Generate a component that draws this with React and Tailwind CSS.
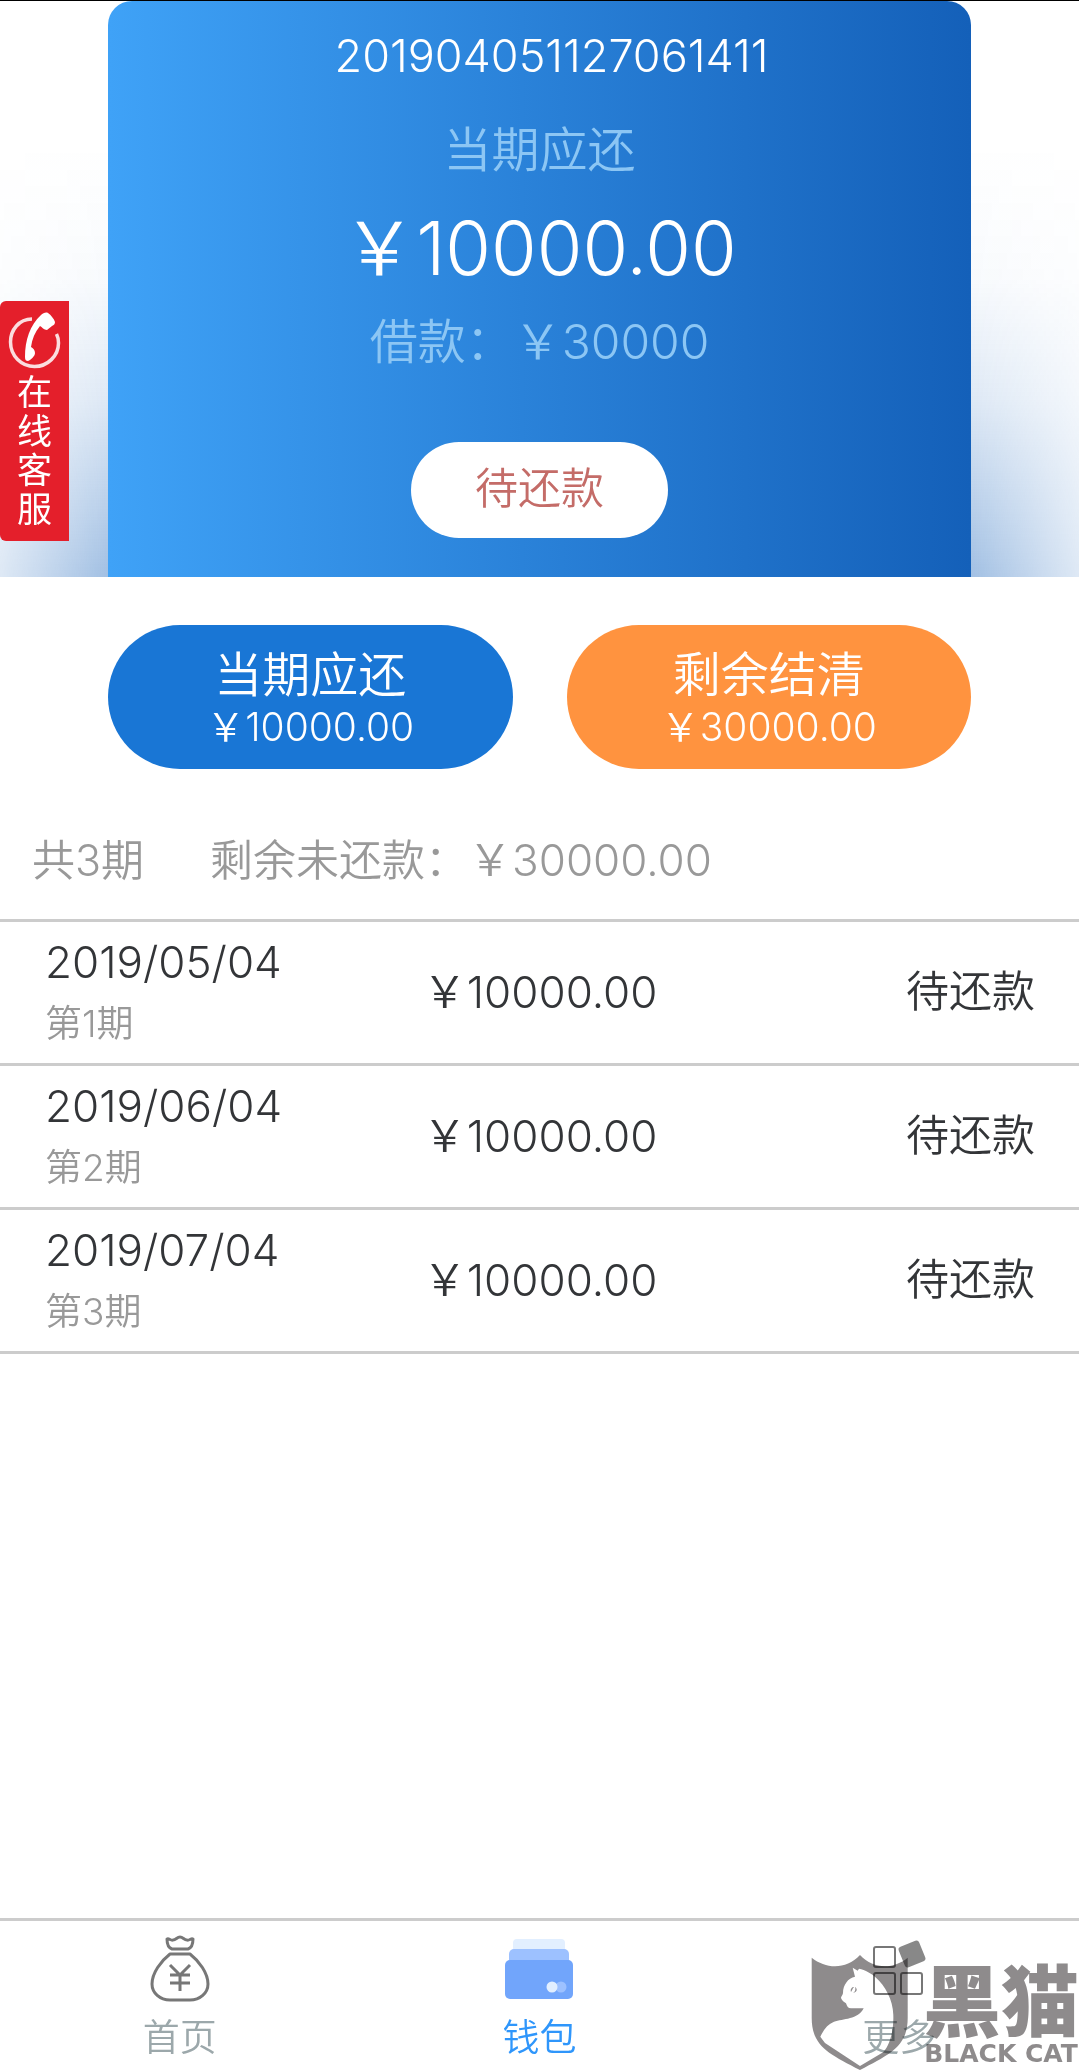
const rows = [
  { date: '2019/05/04', term: '第1期', amount: '￥10000.00', status: '待还款' },
  { date: '2019/06/04', term: '第2期', amount: '￥10000.00', status: '待还款' },
  { date: '2019/07/04', term: '第3期', amount: '￥10000.00', status: '待还款' },
];

function PhoneIcon() {
  return (
    <svg viewBox="0 0 69 62" className="h-[62px] w-[69px]" aria-hidden="true">
      <path d="M32 12C19 12 10.500 23 10.500 35c0 14 11 24.500 24 24.500S58.500 49 58.500 36c0-4-1-7-2-9" fill="none" stroke="#fff" strokeOpacity=".85" strokeWidth="3.500" />
      <path d="M41 8c2-2 5-3 7-2 3 2 6 6 7 9 0 2-1 3-3 4l-5 4c-3 0-5-3-7-4-5 6-8 13-9 21 2 1 4 3 4 6s-4 7-7 8c-2 0-3-1-3-4 0-17 5-32 16-42Z" fill="#fff" />
    </svg>
  );
}

function BagIcon() {
  return (
    <svg viewBox="0 0 64 72" className="h-[72px] w-[64px]" fill="none" stroke="#777" strokeWidth="3" strokeLinejoin="round" strokeLinecap="round" aria-hidden="true">
      <path d="M19 4c0 6 2 9 5 10h16c3-1 5-4 5-10-2-1-4 2-6 1-3 0-4-3-7-3s-4 3-7 3c-2 1-4-2-6-1Z" />
      <path d="M22 19h20c9 7 18 19 18 30 0 9-8 16-18 16H22C12 65 4 58 4 49c0-11 9-23 18-30Z" />
      <path d="M22 30l10 10 10-10M22 40h20M22 48h20M32 40v16" strokeLinecap="butt" />
    </svg>
  );
}

function WalletIcon() {
  return (
    <svg viewBox="0 0 68 72" className="h-[72px] w-[68px]" aria-hidden="true">
      <rect x="8" y="4" width="52" height="30" rx="4" fill="#e2efff" />
      <rect x="4" y="14" width="60" height="30" rx="5" fill="#9dc1ff" />
      <rect x="0" y="25" width="68" height="39" rx="5" fill="#71a5fb" />
      <circle cx="56" cy="52" r="5.500" fill="#9dc1ff" />
      <circle cx="47" cy="52" r="5.500" fill="#e2efff" />
    </svg>
  );
}

function GridIcon() {
  return (
    <svg viewBox="0 0 64 72" className="h-[72px] w-[64px]" fill="none" stroke="#777" strokeWidth="2" aria-hidden="true">
      <rect x="7" y="12" width="21" height="20" rx="2" />
      <rect x="7" y="38" width="21" height="21" rx="2" />
      <rect x="34" y="38" width="21" height="21" rx="2" />
      <rect x="34" y="8" width="22" height="22" rx="3" transform="rotate(-22 45 19)" fill="#888" stroke="none" />
    </svg>
  );
}

function Watermark() {
  return (
    <div className="pointer-events-none absolute right-0 bottom-0 flex items-end text-[#8e8b8c] mix-blend-multiply">
      <svg viewBox="0 0 98 115" className="h-[115px] w-[98px]" aria-hidden="true">
        <path
          fillRule="evenodd"
          fill="#8e8b8c"
          d="M.7 2.700C15 14 35 15 49 0c14 15 34 14 47.700 2.700V63c0 28-17 36-47.700 52C18 99 .7 91 .7 63ZM41.700 12.700l5 3 1.300-2c6 1 13 5 17 9 9 8 17 22 17.300 37C83 79 77 93 71.700 97.500L49 111 14 88 9.300 81.700C13 74 17 69 23 66.700c9-3 24-2 29.700-13.400H40c-3 0-4-2-5-5-2-1-4-3-5-5.300 0-2 2-3 2-5C32 30 37 23 44 21.700Z"
        />
        <path d="M40 37c-1-3 1-5 3-5-2 2-2 4-3 5ZM42 38c2-1 3-4 2-6 3 2 2 5-2 6Z" fill="#8e8b8c" />
      </svg>
      <div className="flex flex-col items-center pl-3.5">
        <span className="text-[78px] leading-[70px] font-black">黑猫</span>
        <span className="font-['DejaVu_Sans',sans-serif] text-[25px] leading-[32px] font-bold whitespace-nowrap">BLACK CAT</span>
      </div>
    </div>
  );
}

export default function App() {
  return (
    <div lang="zh-CN" className="flex min-h-screen flex-col bg-white font-['Inter','Noto_Sans_CJK_SC',sans-serif] font-[350] text-[#333538]">
      <header className="relative overflow-hidden border-t border-black">
        <div className="absolute inset-0 bg-[linear-gradient(to_top,rgba(20,96,185,0.4),rgba(20,96,185,0.28)_15%,rgba(20,96,185,0.14)_31%,rgba(20,96,185,0.03)_52%,rgba(20,96,185,0)_75%)] [mask-image:linear-gradient(to_right,rgba(0,0,0,0.35),black_10%,black_90%,rgba(0,0,0,0.35))]" />
        <section className="relative mx-auto flex w-4/5 flex-col items-center rounded-t-[24px] bg-linear-to-r from-[#3fa2f7] to-[#1460b9] pt-[23px] pb-[39px] text-white">
          <p className="pl-6 text-[45px] leading-[64px]">201904051127061411</p>
          <p className="pt-[26px] text-[48px] leading-[72px] text-[#8cc6f4]">当期应还</p>
          <p className="pt-3 text-[74px] leading-[100px]">￥10000.00</p>
          <p className="pt-1.5 text-[48px] leading-[76px] text-[#8cc6f4]">借款：￥30000</p>
          <button className="mt-[62px] h-24 rounded-full bg-white px-16 pb-1 text-[43px] leading-[64px] text-[#c46c68]">待还款</button>
        </section>
        <button className="absolute top-[300px] left-0 flex w-[69px] flex-col items-center rounded-l-md bg-[#e41f2b] pt-1.5 pb-3 text-[35px] leading-[39px] font-normal text-white">
          <PhoneIcon />
          <span className="w-[35px] pt-1">在线客服</span>
        </button>
      </header>

      <div className="mx-auto flex w-4/5 gap-[54px] pt-12">
        <button className="flex h-36 flex-1 flex-col items-center justify-center rounded-full bg-[#1976d5] pt-1 text-white">
          <span className="text-[48px] leading-[56px]">当期应还</span>
          <span className="text-[39px] leading-[48px]">￥10000.00</span>
        </button>
        <button className="flex h-36 flex-1 flex-col items-center justify-center rounded-full bg-[#ff933f] pt-1 text-white">
          <span className="text-[48px] leading-[56px]">剩余结清</span>
          <span className="text-[39px] leading-[48px]">￥30000.00</span>
        </button>
      </div>

      <div className="flex gap-[66px] px-8 pt-[59px] pb-[27px] text-[43px] leading-[64px] text-[#999]">
        <span>共3期</span>
        <span>
          剩余未还款：<span className="text-[44px]">￥30000.00</span>
        </span>
      </div>

      <table className="w-full table-fixed border-b-[3px] border-[#ccc] text-[44px]">
        <tbody>
          {rows.map((row) => (
            <tr key={row.date} className="h-36 border-t-[3px] border-[#ccc]">
              <td className="w-[39%] pb-0.5 pl-[45px]">
                <div className="leading-[60px]">{row.date}</div>
                <div className="pt-1 text-[37px] leading-[56px] text-[#999]">{row.term}</div>
              </td>
              <td className="pb-0.5 pl-0.5">{row.amount}</td>
              <td className="w-[30%] pr-11 pb-0.5 text-right text-[43px]">{row.status}</td>
            </tr>
          ))}
        </tbody>
      </table>

      <nav className="relative mt-auto grid h-[152px] grid-cols-3 border-t-[3px] border-[#ccc] text-[37px] leading-[56px] text-[#9ca8ab]">
        <a href="#home" className="flex flex-col items-center gap-[3px] pt-3.5">
          <BagIcon />
          首页
        </a>
        <a href="#wallet" className="flex flex-col items-center gap-[3px] pt-3.5 text-[#2f96fb]">
          <WalletIcon />
          钱包
        </a>
        <a href="#more" className="flex flex-col items-center gap-[3px] pt-3.5">
          <GridIcon />
          更多
        </a>
        <Watermark />
      </nav>
    </div>
  );
}
